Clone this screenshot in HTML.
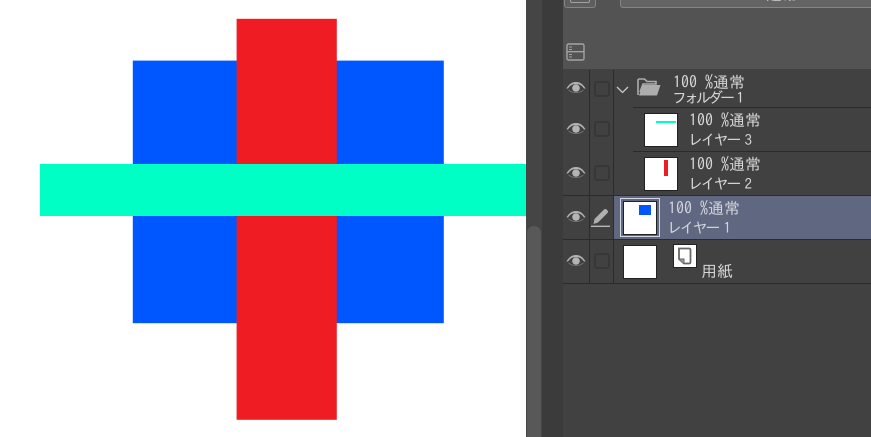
<!DOCTYPE html>
<html>
<head>
<meta charset="utf-8">
<style>
html,body{margin:0;padding:0;background:#fff}
body{width:871px;height:437px;position:relative;overflow:hidden;font-family:"IPAGothic","Liberation Sans",sans-serif}
div,svg{position:absolute;box-sizing:border-box}
.t{color:#d6d6d6;font-size:16px;line-height:16px;white-space:nowrap;font-family:"IPAGothic","Liberation Sans",sans-serif}
.k{font-size:15px;letter-spacing:-2.200px}
.f{font-size:15px;letter-spacing:-3px}
.s{color:#d0d4dc}
.h{background:#2b2b2b}
.cb{width:16px;height:16px;border:2px solid #373737;border-radius:3px;left:594px}
.th{background:#fff;border:1px solid #222}
</style>
</head>
<body>
<svg style="left:0;top:0" width="526" height="437" viewBox="0 0 526 437" shape-rendering="geometricPrecision">
<rect x="132.800" y="60.600" width="311" height="262.600" fill="#0057ff"/>
<rect x="236.600" y="18.800" width="100.200" height="401" fill="#f01c24"/>
<rect x="40" y="164" width="486" height="52" fill="#00ffc4"/>
</svg>

<div style="left:526px;top:0;width:345px;height:437px;background:#414141"></div>
<div style="left:526px;top:0;width:16px;height:437px;background:#454545"></div>
<div style="left:527px;top:226px;width:14px;height:211px;background:#585858;border-radius:7px 7px 0 0"></div>
<div style="left:542px;top:0;width:21px;height:437px;background:#3b3b3b"></div>

<div style="left:563px;top:0;width:308px;height:69px;background:#535353"></div>
<div style="left:564px;top:-8px;width:32px;height:16px;border:1px solid #858585;border-radius:3px;background:#5e5e5e"></div>
<div style="left:570px;top:-8px;width:20px;height:11px;border:1px solid #a0a0a0;border-radius:2px"></div>
<div style="left:620px;top:-8px;width:260px;height:16px;border:1px solid #858585;border-radius:3px;background:#646464"></div>
<div class="t" style="left:766px;top:-14px">通常</div>
<svg style="left:566px;top:43px" width="20" height="18" viewBox="0 0 20 18" fill="none">
<rect x="1" y="1" width="17" height="16" rx="1.500" stroke="#a3a3a3" stroke-width="1.400"/>
<path d="M1 8.700H18" stroke="#a3a3a3" stroke-width="1.400"/>
<path d="M3 4H6M3 6.500H6M3 11.500H6M3 14H6" stroke="#a3a3a3"/>
</svg>

<div style="left:614px;top:196px;width:257px;height:43px;background:#5f6880"></div>

<div class="h" style="left:633px;top:107px;width:238px;height:1px"></div>
<div class="h" style="left:633px;top:151px;width:238px;height:1px"></div>
<div class="h" style="left:563px;top:195px;width:308px;height:1px"></div>
<div class="h" style="left:563px;top:239px;width:308px;height:1px"></div>
<div class="h" style="left:563px;top:283px;width:308px;height:1px"></div>
<div class="h" style="left:589px;top:70px;width:1px;height:213px"></div>
<div class="h" style="left:613px;top:70px;width:1px;height:213px"></div>

<svg style="left:566px;top:81px" width="20" height="14" viewBox="0 0 20 14"><path d="M0.500 7.500C3 3 6 1 10 1S17 3 19.500 7.500L18 7.500C16 4.500 13.500 3 10 3S4 4.500 2 7.500Z" fill="#b4b4b4"/><circle cx="10" cy="7" r="3.800" fill="#b4b4b4"/><path d="M2.500 9C5 11 7 11.500 10 11.500S15 11 17.500 9" stroke="#6e6e6e" fill="none"/></svg>
<svg style="left:566px;top:122px" width="20" height="14" viewBox="0 0 20 14"><path d="M0.500 7.500C3 3 6 1 10 1S17 3 19.500 7.500L18 7.500C16 4.500 13.500 3 10 3S4 4.500 2 7.500Z" fill="#b4b4b4"/><circle cx="10" cy="7" r="3.800" fill="#b4b4b4"/><path d="M2.500 9C5 11 7 11.500 10 11.500S15 11 17.500 9" stroke="#6e6e6e" fill="none"/></svg>
<svg style="left:566px;top:166px" width="20" height="14" viewBox="0 0 20 14"><path d="M0.500 7.500C3 3 6 1 10 1S17 3 19.500 7.500L18 7.500C16 4.500 13.500 3 10 3S4 4.500 2 7.500Z" fill="#b4b4b4"/><circle cx="10" cy="7" r="3.800" fill="#b4b4b4"/><path d="M2.500 9C5 11 7 11.500 10 11.500S15 11 17.500 9" stroke="#6e6e6e" fill="none"/></svg>
<svg style="left:566px;top:210px" width="20" height="14" viewBox="0 0 20 14"><path d="M0.500 7.500C3 3 6 1 10 1S17 3 19.500 7.500L18 7.500C16 4.500 13.500 3 10 3S4 4.500 2 7.500Z" fill="#b4b4b4"/><circle cx="10" cy="7" r="3.800" fill="#b4b4b4"/><path d="M2.500 9C5 11 7 11.500 10 11.500S15 11 17.500 9" stroke="#6e6e6e" fill="none"/></svg>
<svg style="left:566px;top:254px" width="20" height="14" viewBox="0 0 20 14"><path d="M0.500 7.500C3 3 6 1 10 1S17 3 19.500 7.500L18 7.500C16 4.500 13.500 3 10 3S4 4.500 2 7.500Z" fill="#b4b4b4"/><circle cx="10" cy="7" r="3.800" fill="#b4b4b4"/><path d="M2.500 9C5 11 7 11.500 10 11.500S15 11 17.500 9" stroke="#6e6e6e" fill="none"/></svg>

<div class="cb" style="top:81px"></div>
<div class="cb" style="top:121px"></div>
<div class="cb" style="top:165px"></div>
<div class="cb" style="top:253px"></div>

<svg style="left:590px;top:208px" width="23" height="20" viewBox="0 0 23 20" fill="none">
<path d="M4.500 11L14 1.500Q15.500 0.500 16.500 1.500L17.500 2.500Q18.500 3.500 17.500 5L8 14.500L3.500 16Z" fill="#b0b0b0"/>
<path d="M1 18.300H20" stroke="#b8b8b8" stroke-width="1.300"/>
</svg>

<svg style="left:615px;top:85px" width="15" height="10" viewBox="0 0 15 10" fill="none"><path d="M2 2L7.500 7.500L13 2" stroke="#c8c8c8" stroke-width="1.300"/></svg>

<svg style="left:637px;top:77px" width="24" height="20" viewBox="0 0 24 20">
<path d="M1 18V3.500Q1 2 2.500 2H7.500L10 4.500H19V7H6L3 15" fill="none" stroke="#adadad" stroke-width="1.600"/>
<path d="M6 8H23.500L20 18.500H2Z" fill="#adadad"/>
</svg>

<div class="th" style="left:644px;top:113px;width:34px;height:34px"></div>
<div style="left:656px;top:121px;width:20px;height:2px;background:#00ffc4"></div>
<div class="th" style="left:644px;top:157px;width:34px;height:34px"></div>
<div style="left:664px;top:160px;width:4px;height:16px;background:#f01c24"></div>

<div style="left:620px;top:198px;width:40px;height:39px;border:1px solid #d5d8e0"></div>
<div class="th" style="left:623px;top:201px;width:34px;height:34px;border-width:1.500px"></div>
<div style="left:639px;top:205px;width:12px;height:10px;background:#0057ff"></div>

<div class="th" style="left:623px;top:245px;width:34px;height:34px"></div>
<div class="th" style="left:673px;top:244px;width:24px;height:24px"></div>
<svg style="left:676px;top:247px" width="18" height="18" viewBox="0 0 18 18"><path d="M3 1.500H13Q14.500 1.500 14.500 3V15Q14.500 16.500 13 16.500H8L3 12Z" fill="#fff" stroke="#666" stroke-width="1.800"/><path d="M3 12H8V16.500" fill="#999" stroke="#666"/></svg>

<div class="t" style="left:673px;top:74px">100 %通常</div>
<div class="t f" style="left:672px;top:90px">フォルダー 1</div>
<div class="t" style="left:689px;top:112px">100 %通常</div>
<div class="t k" style="left:688px;top:132px">レイヤー 3</div>
<div class="t" style="left:689px;top:156px">100 %通常</div>
<div class="t k" style="left:688px;top:176px">レイヤー 2</div>
<div class="t s" style="left:668px;top:200px">100 %通常</div>
<div class="t s k" style="left:667px;top:220px">レイヤー 1</div>
<div class="t" style="left:701px;top:263px">用紙</div>
</body>
</html>
